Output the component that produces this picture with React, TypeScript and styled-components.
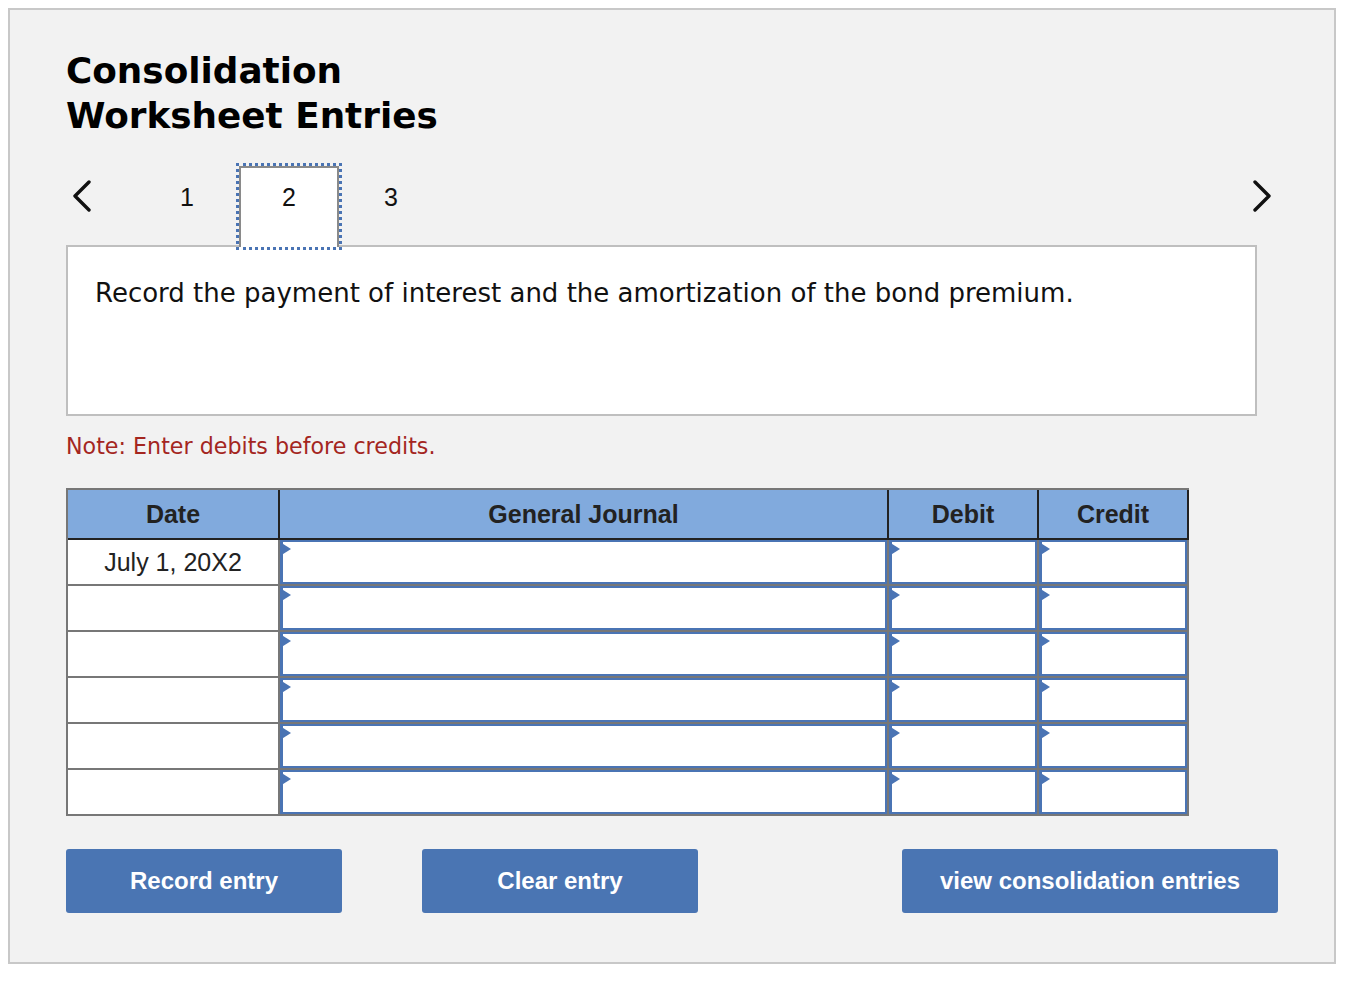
import React from "react";
import styled, { createGlobalStyle } from "styled-components";

const GlobalStyle = createGlobalStyle`
  * { box-sizing: border-box; }
  body {
    margin: 8px;
    background: #ffffff;
    font-family: "DejaVu Sans", Verdana, sans-serif;
  }
`;

const Panel = styled.div`
  width: 1328px;
  background: #f2f2f2;
  border: 2px solid #c8c8c8;
  padding: 38px 56px 49px 56px;
`;

const Title = styled.h1`
  margin: 0;
  font-family: "DejaVu Sans", Verdana, sans-serif;
  font-weight: bold;
  font-size: 35.8px;
  line-height: 45px;
  color: #000;
`;

const NavRow = styled.div`
  margin-top: 28px;
  display: flex;
  align-items: flex-start;
  height: 81px;
  position: relative;
  z-index: 2;
`;

const Arrow = styled.button<{ $right?: boolean }>`
  width: 32px;
  height: 30px;
  margin-top: 15px;
  padding: 0;
  border: 0;
  background: transparent;
  display: flex;
  align-items: center;
  justify-content: center;
  margin-left: ${(p) => (p.$right ? "auto" : "0")};
  cursor: pointer;
`;

const Tabs = styled.div`
  display: flex;
  gap: 2px;
  margin-left: 39px;
`;

const Tab = styled.div<{ $active?: boolean }>`
  width: 100px;
  height: 81px;
  padding-top: ${(p) => (p.$active ? "14px" : "16px")};
  text-align: center;
  font-family: "Liberation Sans", Arial, sans-serif;
  font-size: 25px;
  line-height: 30px;
  color: #111;
  background: ${(p) => (p.$active ? "#ffffff" : "transparent")};
  border: ${(p) => (p.$active ? "2px solid #8a8a8a" : "none")};
  border-bottom: none;
  outline: ${(p) => (p.$active ? "3px dotted #4a74b4" : "none")};
`;

const Question = styled.div`
  position: relative;
  z-index: 1;
  margin-top: -2px;
  width: 1191px;
  height: 171px;
  background: #ffffff;
  border: 2px solid #bfbfbf;
  padding: 30px 27px 26px 27px;
  font-size: 26px;
  line-height: 32px;
  color: #111;
`;

const Note = styled.p`
  margin: 15px 0 0 0;
  font-size: 22.2px;
  line-height: 30px;
  color: #a4261f;
`;

const Journal = styled.table`
  margin-top: 27px;
  width: 1123px;
  table-layout: fixed;
  border-collapse: separate;
  border-spacing: 0;
  border-top: 2px solid #777777;
  border-left: 2px solid #777777;
  font-family: "Liberation Sans", Arial, sans-serif;
  color: #222;
`;

const Head = styled.th<{ $w: number }>`
  width: ${(p) => p.$w}px;
  height: 50px;
  padding: 0;
  background: #81aadd;
  border-right: 2px solid #222;
  border-bottom: 2px solid #222;
  font-size: 25px;
  font-weight: bold;
  text-align: center;
  vertical-align: middle;
`;

const Cell = styled.td`
  height: 46px;
  padding: 0;
  border-right: 2px solid #777777;
  border-bottom: 2px solid #777777;
  background: #ffffff;
  font-size: 25px;
  text-align: center;
  vertical-align: middle;
`;

const Field = styled.div`
  position: relative;
  height: 44px;
  border: 2px solid #4a74b4;
  border-left-width: 3px;
  background: #ffffff;

  &::before {
    content: "";
    position: absolute;
    left: -3px;
    top: 0;
    border-left: 11px solid #4a74b4;
    border-top: 7px solid transparent;
    border-bottom: 7px solid transparent;
  }
`;

const Actions = styled.div`
  margin-top: 33px;
  display: flex;
  align-items: center;
`;

const Action = styled.button<{ $w: number; $gap: number }>`
  width: ${(p) => p.$w}px;
  height: 64px;
  margin-left: ${(p) => p.$gap}px;
  border: 0;
  border-radius: 3px;
  background: #4a75b3;
  color: #ffffff;
  font-family: "Liberation Sans", Arial, sans-serif;
  font-weight: bold;
  font-size: 24px;
  cursor: pointer;
`;

const Chevron = ({ dir }: { dir: "left" | "right" }) => (
  <svg width="20" height="32" viewBox="0 0 20 32" fill="none">
    <polyline
      points={dir === "left" ? "17,2 3,16 17,30" : "3,2 17,16 3,30"}
      stroke="#111"
      strokeWidth="3.4"
      strokeLinecap="round"
      strokeLinejoin="round"
    />
  </svg>
);

const columns = [
  { label: "Date", w: 212 },
  { label: "General Journal", w: 609 },
  { label: "Debit", w: 150 },
  { label: "Credit", w: 150 },
];

const rows = ["July 1, 20X2", "", "", "", "", ""];

export default function App() {
  return (
    <>
      <GlobalStyle />
      <Panel>
        <Title>
          Consolidation
          <br />
          Worksheet Entries
        </Title>

        <NavRow>
          <Arrow aria-label="Previous">
            <Chevron dir="left" />
          </Arrow>
          <Tabs>
            <Tab>1</Tab>
            <Tab $active>2</Tab>
            <Tab>3</Tab>
          </Tabs>
          <Arrow $right aria-label="Next">
            <Chevron dir="right" />
          </Arrow>
        </NavRow>

        <Question>
          Record the payment of interest and the amortization of the bond premium.
        </Question>

        <Note>Note: Enter debits before credits.</Note>

        <Journal>
          <thead>
            <tr>
              {columns.map((c) => (
                <Head key={c.label} $w={c.w}>
                  {c.label}
                </Head>
              ))}
            </tr>
          </thead>
          <tbody>
            {rows.map((date, i) => (
              <tr key={i}>
                <Cell>{date}</Cell>
                <Cell>
                  <Field />
                </Cell>
                <Cell>
                  <Field />
                </Cell>
                <Cell>
                  <Field />
                </Cell>
              </tr>
            ))}
          </tbody>
        </Journal>

        <Actions>
          <Action $w={276} $gap={0}>Record entry</Action>
          <Action $w={276} $gap={80}>Clear entry</Action>
          <Action $w={376} $gap={204}>view consolidation entries</Action>
        </Actions>
      </Panel>
    </>
  );
}
